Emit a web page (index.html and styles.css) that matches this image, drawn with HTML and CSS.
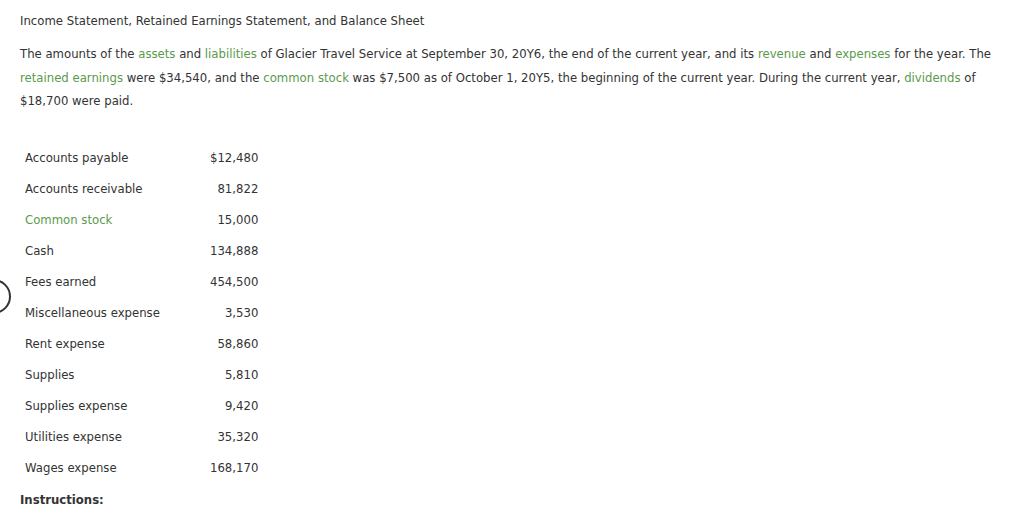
FILE: index.html
```html
<!DOCTYPE html>
<html>
<head>
<meta charset="utf-8">
<link rel="stylesheet" href="styles.css">
</head>
<body>
<div class="ring"></div>
<main class="page">
  <p class="title">Income Statement, Retained Earnings Statement, and Balance Sheet</p>
  <p class="intro">The amounts of the <span class="term">assets</span> and <span class="term">liabilities</span> of Glacier Travel Service at September 30, 20Y6, the end of the current year, and its <span class="term">revenue</span> and <span class="term">expenses</span> for the year. The <span class="term">retained earnings</span> were $34,540, and the <span class="term">common stock</span> was $7,500 as of October 1, 20Y5, the beginning of the current year. During the current year, <span class="term">dividends</span> of $18,700 were paid.</p>
  <table class="accounts">
    <tr><td class="label">Accounts payable</td><td class="amount">$12,480</td></tr>
    <tr><td class="label">Accounts receivable</td><td class="amount">81,822</td></tr>
    <tr><td class="label term">Common stock</td><td class="amount">15,000</td></tr>
    <tr><td class="label">Cash</td><td class="amount">134,888</td></tr>
    <tr><td class="label">Fees earned</td><td class="amount">454,500</td></tr>
    <tr><td class="label">Miscellaneous expense</td><td class="amount">3,530</td></tr>
    <tr><td class="label">Rent expense</td><td class="amount">58,860</td></tr>
    <tr><td class="label">Supplies</td><td class="amount">5,810</td></tr>
    <tr><td class="label">Supplies expense</td><td class="amount">9,420</td></tr>
    <tr><td class="label">Utilities expense</td><td class="amount">35,320</td></tr>
    <tr><td class="label">Wages expense</td><td class="amount">168,170</td></tr>
  </table>
  <p class="instructions">Instructions:</p>
</main>
</body>
</html>
```
FILE: styles.css
```css
html, body {
  margin: 0;
  padding: 0;
  background: #ffffff;
}
body {
  font-family: "DejaVu Sans", Verdana, sans-serif;
  font-size: 11.7px;
  color: #333333;
  position: relative;
  overflow: hidden;
  height: 520px;
}
.page {
  padding: 13px 20px 0 20px;
}
.title {
  margin: 0;
  line-height: 16px;
}
.intro {
  margin: 14px 0 0 0;
  line-height: 23.5px;
}
.term {
  color: #5b9a4c;
}
.accounts {
  border-collapse: collapse;
  margin-top: 29px;
}
.accounts td {
  height: 31px;
  padding: 0 5px;
  vertical-align: middle;
}
.label {
  width: 175px;
}
.amount {
  text-align: right;
  white-space: nowrap;
}
.instructions {
  margin: 9px 0 0 0;
  font-weight: bold;
}
.ring {
  position: absolute;
  left: -24px;
  top: 279px;
  width: 31px;
  height: 31px;
  border: 2.5px solid #333333;
  border-radius: 50%;
}
```
